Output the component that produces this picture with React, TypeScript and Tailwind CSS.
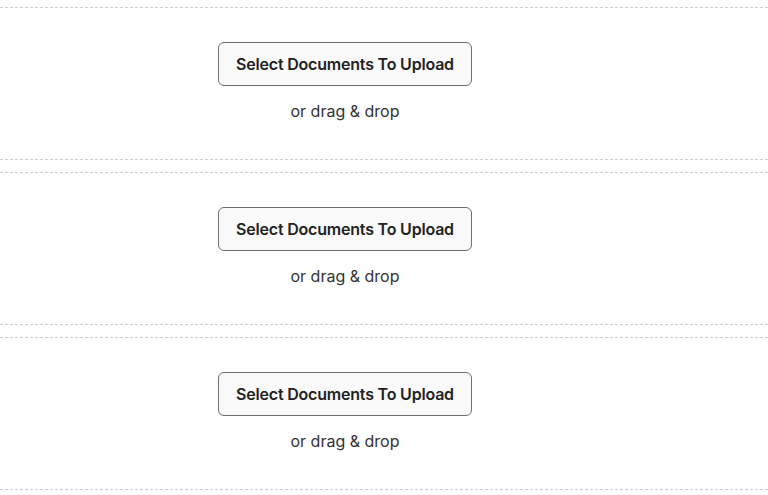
import React from 'react';

const UploadBox = () => (
  <div className="h-[153px] border-y border-dashed border-[#cfcfcf] flex flex-col items-center pt-[34px] pr-[78px]">
    <button className="h-[44px] w-[254px] rounded-[6px] border border-[#6e6e6e] bg-[#fafafa] text-[16px] font-semibold text-[#222] tracking-[-0.2px]">
      Select Documents To Upload
    </button>
    <p className="mt-[13px] text-[16px] leading-6 text-[#333]">or drag &amp; drop</p>
  </div>
);

export default function App() {
  return (
    <div className="w-[768px] h-[495px] bg-[#fefefe] pt-[7px] flex flex-col gap-[12px] overflow-hidden" style={{ fontFamily: 'Inter, "Liberation Sans", sans-serif' }}>
      <UploadBox />
      <UploadBox />
      <UploadBox />
    </div>
  );
}
